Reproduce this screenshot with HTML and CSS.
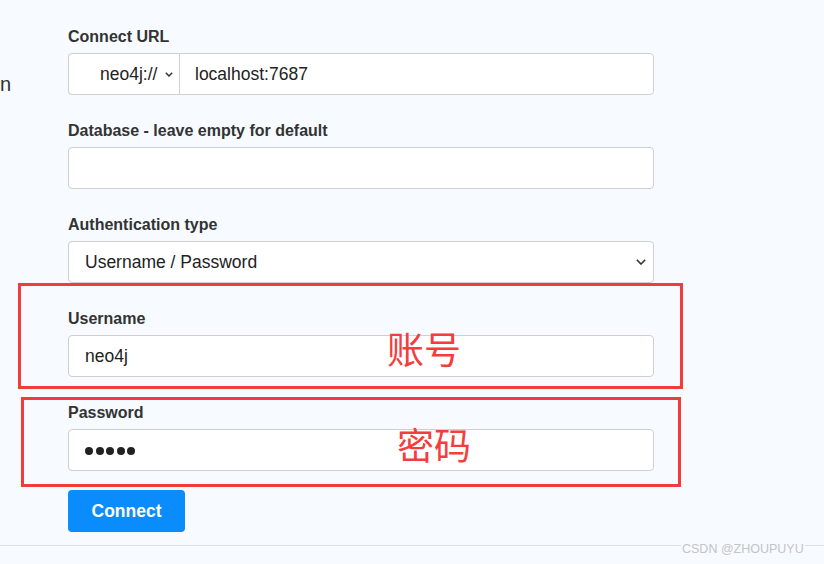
FILE: index.html
```html
<!DOCTYPE html>
<html lang="en">
<head>
<meta charset="utf-8">
<title>Connect to Neo4j</title>
<link rel="stylesheet" href="styles.css">
</head>
<body>
<div class="page">
  <aside class="side"><span class="side-text">n</span></aside>
  <main class="form">
    <div class="group">
      <div class="label">Connect URL</div>
      <div class="input-group">
        <div class="scheme">
          <span>neo4j://</span>
          <svg class="chev small" width="8" height="5" viewBox="0 0 8 5"><path d="M0.8 0.8 L4 4 L7.2 0.8" fill="none" stroke="#333" stroke-width="1.5"/></svg>
        </div>
        <div class="field url">localhost:7687</div>
      </div>
    </div>
    <div class="group">
      <div class="label">Database - leave empty for default</div>
      <div class="field"></div>
    </div>
    <div class="group">
      <div class="label">Authentication type</div>
      <div class="field select">
        <span>Username / Password</span>
        <svg class="chev" width="10" height="6" viewBox="0 0 10 6"><path d="M0.8 0.8 L5 5 L9.2 0.8" fill="none" stroke="#333" stroke-width="1.6"/></svg>
      </div>
    </div>
    <div class="group">
      <div class="label">Username</div>
      <div class="field">neo4j</div>
    </div>
    <div class="group">
      <div class="label">Password</div>
      <div class="field dots"><i></i><i></i><i></i><i></i><i></i></div>
    </div>
    <button class="connect" type="button">Connect</button>
  </main>
</div>
<div class="rule"></div>

<div class="mark mark-user"></div>
<div class="mark mark-pass"></div>
<div class="note note-user">账号</div>
<div class="note note-pass">密码</div>
<div class="watermark">CSDN @ZHOUPUYU</div>
</body>
</html>
```

FILE: styles.css
```css
* { box-sizing: border-box; }

html, body {
  margin: 0;
  padding: 0;
  background: #f7fbff;
  font-family: "Liberation Sans", Arial, sans-serif;
  color: #222;
}

body {
  width: 824px;
  height: 564px;
  overflow: hidden;
  position: relative;
}

.page {
  display: flex;
}

.side {
  width: 68px;
  flex: none;
  overflow: hidden;
  padding-top: 72px;
}

.side-text {
  display: block;
  font-size: 20px;
  line-height: 24px;
  color: #333;
}

.form {
  width: 586px;
  padding-top: 27px;
  display: flex;
  flex-direction: column;
}

.group + .group {
  margin-top: 26px;
}

.label {
  font-size: 16px;
  font-weight: bold;
  line-height: 20px;
  color: #333;
  margin-bottom: 6px;
}

.field {
  height: 42px;
  background: #fff;
  border: 1px solid #cfcfcf;
  border-radius: 4px;
  padding: 0 16px;
  font-size: 17.5px;
  line-height: 40px;
  color: #222;
  display: flex;
  align-items: center;
}

.input-group {
  display: flex;
  height: 42px;
}

.scheme {
  width: 111px;
  flex: none;
  height: 42px;
  background: #fff;
  border: 1px solid #cfcfcf;
  border-right: none;
  border-radius: 4px 0 0 4px;
  padding-left: 31px;
  font-size: 17.5px;
  color: #222;
  display: flex;
  align-items: center;
}

.scheme .chev {
  margin-left: 8px;
  margin-top: 1px;
}

.field.url {
  flex: 1;
  border-radius: 0 4px 4px 0;
  padding-left: 15px;
}

.field.select {
  justify-content: space-between;
  padding-right: 7px;
}

.dots {
  gap: 2.5px;
  padding-top: 1px;
}

.dots i {
  width: 8px;
  height: 8px;
  border-radius: 50%;
  background: #222;
}

.connect {
  margin-top: 19px;
  width: 117px;
  height: 42px;
  border: none;
  border-radius: 4px;
  background: #0a8cfd;
  color: #fff;
  font-family: "Liberation Sans", Arial, sans-serif;
  font-size: 17.5px;
  font-weight: bold;
  padding: 0;
}

.rule {
  margin-top: 13px;
  height: 1px;
  background: #d8e3ef;
}

.mark {
  position: absolute;
  border: 3px solid #f23b3b;
}

.mark-user {
  left: 18px;
  top: 283px;
  width: 665px;
  height: 106px;
}

.mark-pass {
  left: 21px;
  top: 397px;
  width: 660px;
  height: 90px;
}

.note {
  position: absolute;
  font-family: "Noto Sans CJK SC", sans-serif;
  font-size: 37px;
  line-height: 37px;
  color: #f53d3d;
}

.note-user {
  left: 387px;
  top: 330px;
}

.note-pass {
  left: 397px;
  top: 426px;
}

.watermark {
  position: absolute;
  left: 681px;
  top: 541px;
  font-size: 12.5px;
  line-height: 16px;
  color: #c4c4c4;
  background: #f7fbff;
  padding: 0 1px;
}
```
